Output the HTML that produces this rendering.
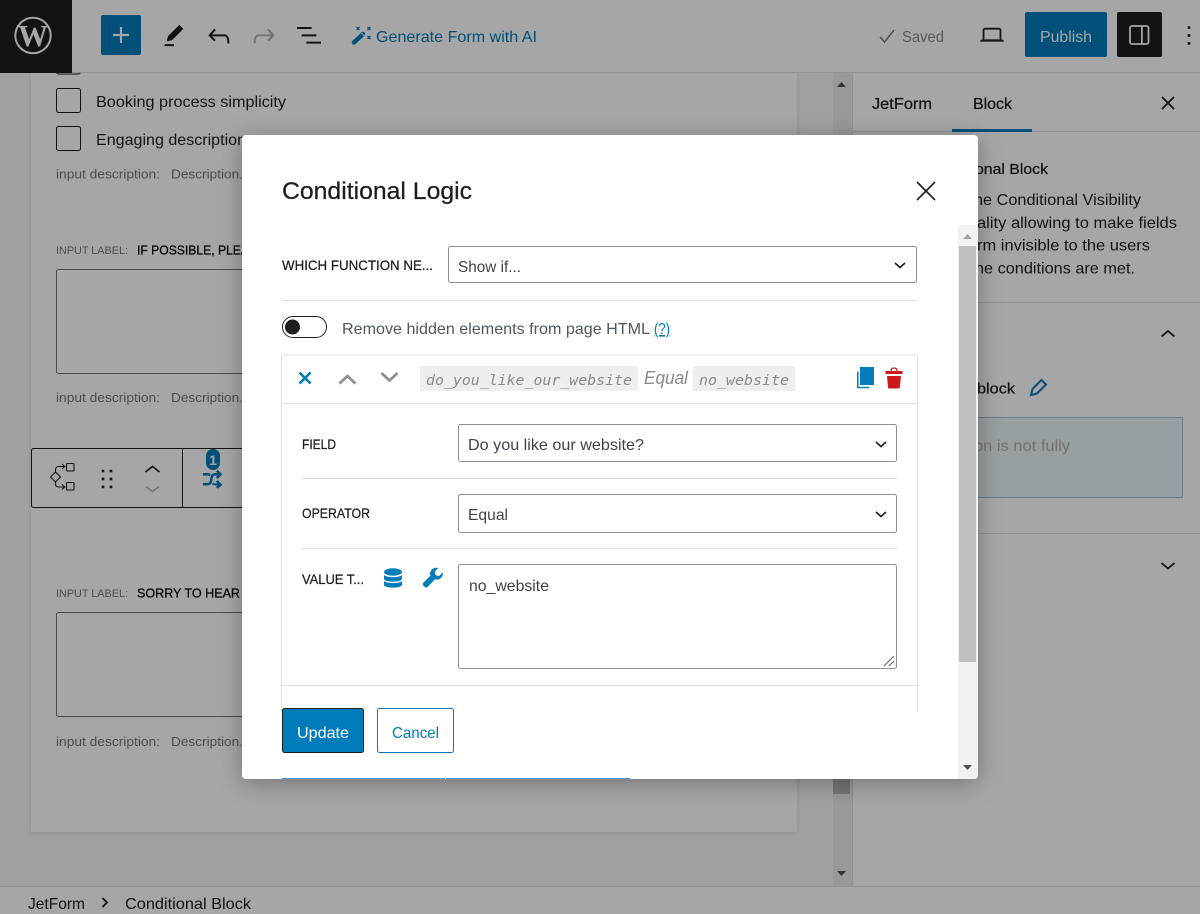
<!DOCTYPE html>
<html lang="en"><head><meta charset="utf-8"><title>Conditional Logic</title>
<style>
html,body{margin:0;padding:0;width:1200px;height:914px;overflow:hidden;background:#fff}
svg{display:block;position:absolute;left:0;top:0}
#ov{position:absolute;left:0;top:0;width:1200px;height:914px;background:rgba(0,0,0,.35)}
text{font-family:"Liberation Sans",sans-serif;font-size:15px;fill:#1e1e1e;white-space:pre}
.m{font-family:"DejaVu Sans Mono","Liberation Mono",monospace;font-style:italic;fill:#8a8a8a;font-size:14px}
.b{stroke:#1e1e1e;stroke-width:.25}
</style></head><body>
<svg width="1200" height="914" viewBox="0 0 1200 914" xmlns="http://www.w3.org/2000/svg">
<defs>
<filter id="c" x="-5%" y="-5%" width="110%" height="110%"><feDropShadow dx="0" dy="1" stdDeviation="2" flood-color="#000" flood-opacity=".1"/></filter>
</defs>
<!-- page -->
<rect width="1200" height="914" fill="#fff"/>
<rect x="0" y="73" width="852" height="813" fill="#f6f6f6"/>
<rect x="31" y="60" width="766" height="772" fill="#fff" filter="url(#c)"/>
<!-- canvas scrollbar -->
<rect x="833" y="73" width="19" height="813" fill="#ebebeb"/>
<rect x="833" y="700" width="17" height="94" fill="#b4b4b4"/>
<path d="M837 87l4.500-5 4.500 5z" fill="#505050"/>
<path d="M837 871l4.500 5 4.500-5z" fill="#505050"/>

<!-- canvas content -->
<rect x="56.500" y="55" width="24" height="19" rx="2" fill="#fff" stroke="#1e1e1e"/>
<rect x="56.500" y="88.500" width="24" height="24" rx="2" fill="#fff" stroke="#1e1e1e"/>
<text x="96" y="107" textLength="190" lengthAdjust="spacingAndGlyphs" style="font-size:16px">Booking process simplicity</text>
<rect x="56.500" y="126.500" width="24" height="24" rx="2" fill="#fff" stroke="#1e1e1e"/>
<text x="96" y="145" textLength="150" lengthAdjust="spacingAndGlyphs" style="font-size:16px">Engaging description</text>
<text x="56" y="178.500" textLength="104" lengthAdjust="spacingAndGlyphs" style="font-size:13px;fill:#757575">input description:</text>
<text x="171" y="178.500" textLength="72" lengthAdjust="spacingAndGlyphs" style="font-size:13px;fill:#757575">Description.</text>
<text x="56" y="254" textLength="72" lengthAdjust="spacingAndGlyphs" style="font-size:11px;fill:#757575">INPUT LABEL:</text>
<text x="137" y="254.500" textLength="112" lengthAdjust="spacingAndGlyphs" style="font-size:13px;fill:#000;stroke:#000;stroke-width:.25">IF POSSIBLE, PLEA</text>
<rect x="56.500" y="269.500" width="300" height="104" rx="2" fill="#fff" stroke="#757575"/>
<text x="56" y="402" textLength="104" lengthAdjust="spacingAndGlyphs" style="font-size:13px;fill:#757575">input description:</text>
<text x="171" y="402" textLength="72" lengthAdjust="spacingAndGlyphs" style="font-size:13px;fill:#757575">Description.</text>
<!-- block toolbar -->
<rect x="31.500" y="448.500" width="300" height="59" rx="2" fill="#fff" stroke="#1e1e1e"/>
<rect x="182" y="449" width="1" height="59" fill="#1e1e1e"/>
<g fill="none" stroke="#1e1e1e" stroke-width="1.100">
<rect x="66.500" y="463.500" width="7.500" height="7.500" rx="1"/>
<rect x="66.500" y="482.500" width="7.500" height="7.500" rx="1"/>
<path d="M55.500 472l5 5-5 5-5-5z"/>
<path d="M55.500 472v-2.500a3 3 0 0 1 3-3H65M62 464l2.800 2.500-2.800 2.500M55.500 482v2a3 3 0 0 0 3 3H65M62 484.500l2.800 2.500-2.800 2.500"/>
</g>
<path transform="translate(107 479) scale(1.33) translate(-12 -12)" d="M8 7h2V5H8v2zm0 6h2v-2H8v2zm0 6h2v-2H8v2zm6-14v2h2V5h-2zm0 8h2v-2h-2v2zm0 6h2v-2h-2v2z" fill="#1e1e1e"/>
<path d="M145.500 472l7-5.500 7 5.500" fill="none" stroke="#1e1e1e" stroke-width="1.700"/>
<path d="M146 486.500l6.500 5 6.500-5" fill="none" stroke="#b5b5b5" stroke-width="1.700"/>
<path transform="translate(212.500 479.500) scale(1.15) translate(-12 -12)" d="M17.192 6.750L15.470 5.030l1.060-1.060 3.537 3.530-3.537 3.530-1.060-1.060 1.723-1.720h-3.190c-.602 0-.993.202-1.280.498-.309.319-.538.792-.695 1.383-.13.488-.222 1.023-.296 1.508-.034.664-.116 1.413-.303 2.117-.193.721-.513 1.467-1.068 2.040-.575.594-1.359.954-2.357.954H4v-1.500h4.003c.601 0 .993-.202 1.280-.498.308-.319.538-.792.695-1.383.149-.557.216-1.093.288-1.662l.039-.31a9.653 9.653 0 0 1 .272-1.653c.193-.722.513-1.467 1.067-2.040.576-.594 1.360-.954 2.358-.954h3.190zM8.004 6.750c.8 0 1.460.23 1.988.628a6.240 6.240 0 0 0-.684 1.396 1.725 1.725 0 0 0-.024-.026c-.287-.296-.679-.498-1.280-.498H4v-1.500h4.003zM12.699 14.726c-.161.459-.38.94-.684 1.396.527.397 1.188.628 1.988.628h3.190l-1.722 1.720 1.060 1.060L20.067 16.500l-3.537-3.530-1.060 1.060 1.723 1.720h-3.190c-.602 0-.993-.202-1.280-.498a1.960 1.960 0 0 1-.024-.026z" fill="#007cba" stroke="#007cba" stroke-width=".7"/>
<rect x="206" y="449" width="14" height="21" rx="7" fill="#007cba"/>
<text x="213" y="465" text-anchor="middle" style="font-size:14px;font-weight:700;fill:#fff">1</text>
<text x="56" y="597" textLength="72" lengthAdjust="spacingAndGlyphs" style="font-size:11px;fill:#757575">INPUT LABEL:</text>
<text x="137" y="597.500" textLength="103" lengthAdjust="spacingAndGlyphs" style="font-size:13px;fill:#000;stroke:#000;stroke-width:.25">SORRY TO HEAR</text>
<rect x="56.500" y="612.500" width="300" height="104" rx="2" fill="#fff" stroke="#757575"/>
<text x="56" y="746" textLength="104" lengthAdjust="spacingAndGlyphs" style="font-size:13px;fill:#757575">input description:</text>
<text x="171" y="746" textLength="72" lengthAdjust="spacingAndGlyphs" style="font-size:13px;fill:#757575">Description.</text>

<!-- header -->
<rect x="0" y="0" width="1200" height="72" fill="#fff"/>
<rect x="0" y="72" width="1200" height="1" fill="#e0e0e0"/>
<rect x="852" y="73" width="1" height="813" fill="#e0e0e0"/>
<rect x="0" y="886" width="1200" height="28" fill="#fff"/>
<rect x="0" y="886" width="1200" height="1" fill="#e0e0e0"/>
<rect x="0" y="0" width="72" height="73" fill="#1e1e1e"/>
<circle cx="33" cy="35.500" r="17.700" fill="none" stroke="#fff" stroke-width="2"/>
<text x="33" y="46" text-anchor="middle" textLength="30" lengthAdjust="spacingAndGlyphs" style="font-family:'Liberation Serif',serif;font-size:31px;font-weight:700;fill:#fff">W</text>
<rect x="101" y="15" width="40" height="40" rx="2" fill="#007cba"/>
<path transform="translate(121 35) scale(1.33) translate(-12 -12)" d="M18 11.200h-5.200V6h-1.600v5.200H6v1.600h5.200V18h1.600v-5.200H18z" fill="#fff"/>
<path transform="translate(174 35.500) scale(1.33) translate(-12 -12)" d="m19 7-3-3-8.500 8.500-1 4 4-1L19 7Zm-7 11.500H5V20h7v-1.500Z" fill="#1e1e1e"/>
<path transform="translate(219 36) scale(1.33) translate(-12 -12)" d="M18.300 11.700c-.6-.6-1.400-.9-2.300-.9H6.700l2.900-3.300-1.100-1-4.500 5L8.500 16l1-1-2.700-2.700H16c.5 0 .9.2 1.300.5 1 1 1 3.400 1 4.500v.3h1.500v-.2c0-1.500 0-4.300-1.500-5.700z" fill="#1e1e1e"/>
<path transform="translate(264 36) scale(1.33) translate(-12 -12)" d="M15.600 6.500l-1.100 1 2.900 3.300H8c-.9 0-1.700.3-2.300.9-1.400 1.500-1.400 4.200-1.400 5.600v.2h1.500v-.3c0-1.100 0-3.500 1-4.500.3-.3.700-.5 1.300-.5h9.200L14.500 15l1.100 1.100 4.600-4.600-4.600-5z" fill="#b0b0b0"/>
<path transform="translate(309 35) scale(1.33) translate(-12 -12)" d="M3 6h11v1.500H3V6Zm3.500 5.500h11V13h-11v-1.500ZM21 17H10v1.500h11V17Z" fill="#1e1e1e"/>
<!-- wand -->
<path d="M354 42.500l9-8.500" stroke="#007cba" stroke-width="4.500" stroke-linecap="round"/>
<path d="M361.500 33l3 3" stroke="#fff" stroke-width="1"/>
<path d="M356.500 27l3 3M359.500 27l-3 3M367.500 27l3 3M370.500 27l-3 3M367.500 36l3 3M370.500 36l-3 3" stroke="#007cba" stroke-width="1.300"/>
<text x="376" y="42" textLength="161" lengthAdjust="spacingAndGlyphs" style="font-size:16px;fill:#007cba">Generate Form with AI</text>
<path d="M880 37l4.500 5L894 30" fill="none" stroke="#757575" stroke-width="1.500"/>
<text x="902" y="42" textLength="42" lengthAdjust="spacingAndGlyphs" style="font-size:16px;fill:#8a8a8a">Saved</text>
<path transform="translate(992 35) scale(1.2) translate(-12 -12)" d="M20.500 16h-.7V8c0-1.100-.9-2-2-2H6.200c-1.100 0-2 .9-2 2v8h-.7c-.8 0-1.500.7-1.500 1.500h20c0-.8-.7-1.500-1.500-1.500zM5.700 8c0-.3.2-.5.5-.5h11.600c.3 0 .5.2.5.5v7.600H5.700V8z" fill="#1e1e1e"/>
<rect x="1025" y="12" width="82" height="45" rx="2" fill="#007cba"/>
<text x="1040" y="42" textLength="52" lengthAdjust="spacingAndGlyphs" style="font-size:16px;fill:#fff">Publish</text>
<rect x="1117" y="12" width="45" height="45" rx="2" fill="#1e1e1e"/>
<rect x="1130" y="26" width="18.500" height="18" rx="2" fill="none" stroke="#fff" stroke-width="1.800"/>
<rect x="1141" y="26" width="1.800" height="18" fill="#fff"/>
<path transform="translate(1189 35.500) scale(1.33) translate(-12 -12)" d="M13 19h-2v-2h2v2zm0-6h-2v-2h2v2zm0-6h-2V5h2v2z" fill="#1e1e1e"/>

<!-- footer -->
<text x="28" y="909" textLength="57" lengthAdjust="spacingAndGlyphs" style="font-size:16px">JetForm</text>
<path d="M102.500 898l4.500 4.500-4.500 4.500" fill="none" stroke="#1e1e1e" stroke-width="1.800"/>
<text x="125" y="909" textLength="126" lengthAdjust="spacingAndGlyphs" style="font-size:16px">Conditional Block</text>
<!-- sidebar -->
<rect x="853" y="131" width="347" height="1" fill="#e0e0e0"/>
<text class="b" x="872" y="109" textLength="60" lengthAdjust="spacingAndGlyphs" style="font-size:16px">JetForm</text>
<text class="b" x="973" y="109" textLength="39" lengthAdjust="spacingAndGlyphs" style="font-size:16px">Block</text>
<rect x="952" y="129" width="80" height="3" fill="#007cba"/>
<path d="M1162 97l12 12M1174 97l-12 12" stroke="#1e1e1e" stroke-width="1.800"/>
<text class="b" x="975" y="174" textLength="73" lengthAdjust="spacingAndGlyphs" style="font-size:15px">onal Block</text>
<text x="974" y="205" textLength="167" lengthAdjust="spacingAndGlyphs" style="font-size:16px">he Conditional Visibility</text>
<text x="977" y="228" textLength="200" lengthAdjust="spacingAndGlyphs" style="font-size:16px">ality allowing to make fields</text>
<text x="977" y="250.500" textLength="173" lengthAdjust="spacingAndGlyphs" style="font-size:16px">rm invisible to the users</text>
<text x="975" y="273.500" textLength="160" lengthAdjust="spacingAndGlyphs" style="font-size:16px">he conditions are met.</text>
<rect x="853" y="302" width="347" height="1" fill="#e0e0e0"/>
<path d="M1161.500 336.500l6.500-5.500 6.500 5.500" fill="none" stroke="#1e1e1e" stroke-width="1.800"/>
<text class="b" x="977" y="393.500" textLength="38" lengthAdjust="spacingAndGlyphs" style="font-size:15px">block</text>
<path d="M1031 395l1.500-6 9-9 4.500 4.500-9 9z" fill="none" stroke="#007cba" stroke-width="2"/>
<rect x="940.500" y="417.500" width="242" height="80" fill="#e8f4fb" stroke="#9fc2d9"/>
<text x="974" y="451" textLength="96" lengthAdjust="spacingAndGlyphs" style="font-size:16px;fill:#b0b0b0">on is not fully</text>
<rect x="853" y="533" width="347" height="1" fill="#e0e0e0"/>
<path d="M1161.500 563l6.500 5.500 6.500-5.500" fill="none" stroke="#1e1e1e" stroke-width="1.800"/>
</svg>

<!-- overlay -->
<div id="ov"></div>

<svg width="1200" height="914" viewBox="0 0 1200 914" xmlns="http://www.w3.org/2000/svg">
<defs>
<filter id="s" x="-10%" y="-10%" width="120%" height="120%"><feDropShadow dx="0" dy="4" stdDeviation="12" flood-color="#000" flood-opacity=".3"/></filter>
</defs>
<!-- modal -->
<rect x="242" y="135" width="736" height="644" rx="4" fill="#fff" filter="url(#s)"/>
<rect x="282" y="778" width="163" height="1" fill="#4aa0d0"/>
<rect x="446" y="778" width="184" height="1" fill="#4aa0d0"/>
<text class="b" x="282" y="199" textLength="190" lengthAdjust="spacingAndGlyphs" style="font-size:24px">Conditional Logic</text>
<path d="M917 182l18 18M935 182l-18 18" stroke="#1e1e1e" stroke-width="1.600"/>
<!-- modal scrollbar -->
<path d="M958 225h20v550a4 4 0 0 1-4 4h-16z" fill="#f1f1f1"/>
<rect x="959" y="246" width="17" height="416" fill="#c1c1c1"/>
<path d="M963 239l4.500-5 4.500 5z" fill="#a3a3a3"/>
<path d="M963 765l4.500 5 4.500-5z" fill="#505050"/>

<text class="b" x="282" y="270" textLength="151" lengthAdjust="spacingAndGlyphs" style="font-size:14px">WHICH FUNCTION NE...</text>
<rect x="448.500" y="246.500" width="468" height="36" rx="2" fill="#fff" stroke="#8c8f94"/>
<text x="458" y="272" textLength="63" lengthAdjust="spacingAndGlyphs" style="font-size:16px;fill:#3c434a">Show if...</text>
<path d="M895 263l5 4.500 5-4.500" fill="none" stroke="#1e1e1e" stroke-width="1.600"/>
<rect x="282" y="300" width="635" height="1" fill="#e0e0e0"/>
<rect x="282.500" y="316.500" width="44" height="21" rx="10.500" fill="#fff" stroke="#1e1e1e"/>
<circle cx="292.500" cy="327" r="7.500" fill="#1e1e1e"/>
<text x="342" y="334" textLength="308" lengthAdjust="spacingAndGlyphs" style="font-size:16px;fill:#50575e">Remove hidden elements from page HTML</text>
<text x="654" y="334" textLength="16" lengthAdjust="spacingAndGlyphs" style="font-size:16px;fill:#007cba;text-decoration:underline">(?)</text>

<!-- repeater -->
<path d="M281.500 712V357a2 2 0 0 1 2-2h632a2 2 0 0 1 2 2v355" fill="none" stroke="#e0e0e0"/>
<rect x="282" y="403" width="635" height="1" fill="#e0e0e0"/>
<path d="M299.500 372.500l11 11M310.500 372.500l-11 11" stroke="#007cba" stroke-width="2.600"/>
<path d="M339.500 383.500l8-7.500 8 7.500" fill="none" stroke="#8f8f8f" stroke-width="2.800"/>
<path d="M381.500 373l8 7.500 8-7.500" fill="none" stroke="#8f8f8f" stroke-width="2.800"/>
<rect x="420" y="366" width="218" height="25" fill="#eee"/>
<text class="m" x="426" y="385" textLength="206" lengthAdjust="spacingAndGlyphs">do_you_like_our_website</text>
<text x="644" y="384" textLength="44" lengthAdjust="spacingAndGlyphs" style="font-size:18px;font-style:italic;fill:#8a8a8a">Equal</text>
<rect x="693" y="366" width="102" height="25" fill="#eee"/>
<text class="m" x="699" y="385" textLength="90" lengthAdjust="spacingAndGlyphs">no_website</text>
<!-- copy -->
<rect x="860" y="367" width="14" height="18" fill="#007cba"/>
<path d="M857.800 371.500v16h11.500" fill="none" stroke="#007cba" stroke-width="1.500"/>
<!-- trash -->
<path d="M885.500 371h17v3h-17z" fill="#cc1818"/>
<path d="M891 371c0-2 1-3 3-3s3 1 3 3" fill="none" stroke="#cc1818" stroke-width="1.200"/>
<path d="M887 376h14l-1.200 11.500a1.200 1.200 0 0 1-1.200 1h-9.400a1.200 1.200 0 0 1-1.200-1z" fill="#cc1818"/>

<!-- field row -->
<text class="b" x="302" y="449" textLength="34" lengthAdjust="spacingAndGlyphs" style="font-size:14px">FIELD</text>
<rect x="458.500" y="424.500" width="438" height="37" rx="2" fill="#fff" stroke="#8c8f94"/>
<text x="468" y="450" textLength="176" lengthAdjust="spacingAndGlyphs" style="font-size:16px;fill:#3c434a">Do you like our website?</text>
<path d="M876 442l5 4.500 5-4.500" fill="none" stroke="#1e1e1e" stroke-width="1.600"/>
<rect x="302" y="478" width="595" height="1" fill="#e0e0e0"/>
<text class="b" x="302" y="518" textLength="68" lengthAdjust="spacingAndGlyphs" style="font-size:14px">OPERATOR</text>
<rect x="458.500" y="494.500" width="438" height="38" rx="2" fill="#fff" stroke="#8c8f94"/>
<text x="468" y="520" textLength="40" lengthAdjust="spacingAndGlyphs" style="font-size:16px;fill:#3c434a">Equal</text>
<path d="M876 512l5 4.500 5-4.500" fill="none" stroke="#1e1e1e" stroke-width="1.600"/>
<rect x="302" y="548" width="595" height="1" fill="#e0e0e0"/>
<text class="b" x="302" y="584" textLength="62" lengthAdjust="spacingAndGlyphs" style="font-size:14px">VALUE T...</text>
<!-- database -->
<g fill="#007cba">
<ellipse cx="393" cy="572" rx="9" ry="3.800"/>
<path d="M384 575c2 2.800 16 2.800 18 0v4c-1 3.500-17 3.500-18 0z"/>
<path d="M384 581c2 2.800 16 2.800 18 0v4c-1 3.500-17 3.500-18 0z"/>
</g>
<!-- wrench -->
<path d="M424.500 586.500a2 2 0 0 0 3 0.500l7.500-7.800c3 1 6.300-.3 7.500-3.500.5-1.200.5-2.400.3-3.200l-3.800 3.600-3.500-1-.9-3.400 3.800-3.700c-3.200-.9-6.900.5-8 3.800-.5 1.400-.4 2.800 0 3.800l-7.300 7.500a2.500 2.500 0 0 0 1.400 3.400z" fill="#007cba"/>
<rect x="458.500" y="564.500" width="438" height="104" rx="2" fill="#fff" stroke="#8c8f94"/>
<text x="469" y="591" textLength="80" lengthAdjust="spacingAndGlyphs" style="font-size:16px;fill:#3c434a">no_website</text>
<path d="M884 666l10-10M889 666l5-5" stroke="#6f6f6f" stroke-width="1.200"/>
<rect x="282" y="685" width="635" height="1" fill="#e0e0e0"/>
<!-- buttons -->
<rect x="282.500" y="708.500" width="81" height="44" rx="2" fill="#007cba" stroke="#1e1e1e"/>
<text x="297" y="738" textLength="52" lengthAdjust="spacingAndGlyphs" style="font-size:16px;fill:#fff">Update</text>
<rect x="377.500" y="708.500" width="76" height="44" rx="2" fill="#fff" stroke="#007cba"/>
<text x="392" y="738" textLength="47" lengthAdjust="spacingAndGlyphs" style="font-size:16px;fill:#007cba">Cancel</text>
</svg>
</body></html>
